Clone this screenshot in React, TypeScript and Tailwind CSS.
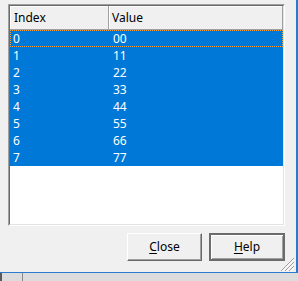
import React from "react";

const rows = [0, 1, 2, 3, 4, 5, 6, 7].map((i) => ({
  index: String(i),
  value: `${i}${i}`,
}));

function SizeGrip() {
  return (
    <svg
      className="absolute right-[2px] bottom-[1px]"
      width="13"
      height="13"
      viewBox="0 0 13 13"
      aria-hidden="true"
    >
      {[0, 4, 8].map((o) => (
        <g key={o}>
          <line x1={13} y1={o} x2={o} y2={13} stroke="#a0a0a0" strokeWidth="1" />
          <line x1={13} y1={o + 1.5} x2={o + 1.5} y2={13} stroke="#ffffff" strokeWidth="1" />
        </g>
      ))}
    </svg>
  );
}

export default function App() {
  const font = "font-['Noto_Sans','Liberation_Sans',sans-serif] text-[12px]";

  return (
    <div className={`w-[298px] h-[281px] bg-[#f0f0f0] flex flex-col ${font}`}>
      {/* dialog */}
      <div className="relative h-[273px] border-r-2 border-b border-[#2a7ad2] pl-[8px] pr-[11px] pt-[4px] flex flex-col">
        {/* list view */}
        <div className="w-[277px] h-[222px] border border-t-[#a0a0a0] border-l-[#a0a0a0] border-r-white border-b-white">
          <div className="w-full h-full bg-white border border-t-[#696969] border-l-[#696969] border-r-[#e3e3e3] border-b-[#e3e3e3] flex flex-col">
            {/* header */}
            <div className="flex h-[24px] bg-[#f0f0f0] text-black">
              <div className="w-[99px] flex items-center pl-[4px] border-r border-b border-[#a0a0a0] shadow-[inset_1px_1px_0_#ffffff]">
                Index
              </div>
              <div className="flex-1 flex items-center pl-[3px] border-r border-b border-[#a0a0a0] shadow-[inset_1px_1px_0_#ffffff]">
                Value
              </div>
            </div>
            {/* rows */}
            <div className="flex flex-col">
              {rows.map((r, i) => (
                <div
                  key={r.index}
                  className={`flex h-[17px] items-center bg-[#0078d7] text-white ${
                    i === 0 ? "border border-dotted border-[#f5a23c]" : "border border-transparent"
                  }`}
                >
                  <div className="w-[99px] pl-[2px] leading-none">{r.index}</div>
                  <div className="flex-1 pl-[3px] leading-none">{r.value}</div>
                </div>
              ))}
            </div>
          </div>
        </div>

        {/* buttons */}
        <div className="mt-[7px] flex justify-end gap-[7px]">
          <button
            type="button"
            className="w-[75px] h-[28px] bg-[#f0f0f0] text-black border border-t-white border-l-white border-r-[#696969] border-b-[#696969] shadow-[inset_-1px_-1px_0_#a0a0a0]"
          >
            <span className="underline underline-offset-2">C</span>lose
          </button>
          <button
            type="button"
            className="w-[76px] h-[28px] bg-[#f0f0f0] text-black border-2 border-[#6b6b6b] shadow-[inset_1px_1px_0_#ffffff,inset_-1px_-1px_0_#a0a0a0]"
          >
            <span className="underline underline-offset-2">H</span>elp
          </button>
        </div>

        <SizeGrip />
      </div>

      {/* window behind */}
      <div className="flex-1 flex bg-[#dcdcdc]">
        <div className="w-[2px] bg-[#5a5a5a]" />
        <div className="w-[21px] border-r border-[#8a8a8a]" />
        <div className="flex-1" />
      </div>
    </div>
  );
}
